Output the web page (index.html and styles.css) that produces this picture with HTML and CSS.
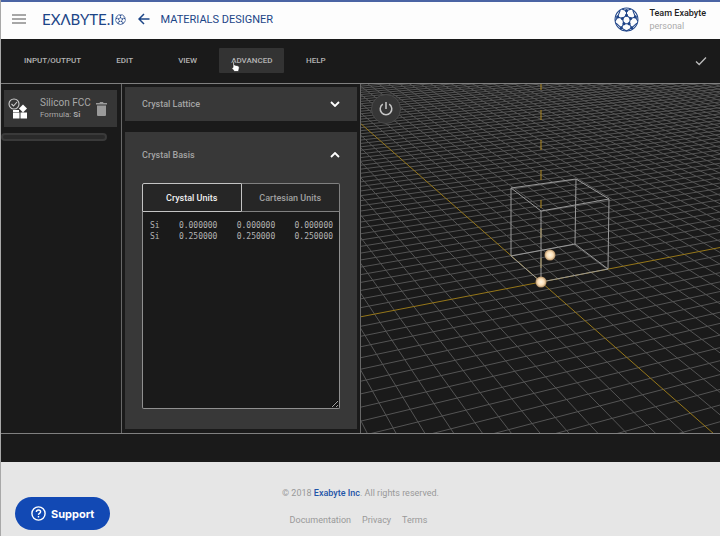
FILE: index.html
```
<!DOCTYPE html>
<html lang="en">
<head>
  <meta charset="utf-8">
  <title>Materials Designer</title>
  <link rel="stylesheet" href="styles.css">
</head>
<body>
  <header class="header">
    <button class="icon-button" type="button" aria-label="Menu">
      <svg width="14" height="10" viewBox="0 0 14 10"><path d="M0 1h14M0 5h14M0 9h14" stroke="#8a8a8a" stroke-width="1.6"/></svg>
    </button>
    <a class="logo" href="#">EXΛBYTE.I<svg width="11" height="11" viewBox="0 0 24 24"><use href="#ball"/></svg></a>
    <a class="back" href="#" aria-label="Back">
      <svg width="12" height="12" viewBox="0 0 12 12"><path d="M11.500 6H1M6 1L1 6l5 5" fill="none" stroke="#1c4587" stroke-width="1.5"/></svg>
    </a>
    <h1 class="title">MATERIALS DESIGNER</h1>
    <div class="account">
      <svg width="25" height="25" viewBox="0 0 24 24">
        <g id="ball" fill="none" stroke="#1f4488" stroke-width="1">
          <circle cx="12" cy="12" r="11"/>
          <path d="M12 8l4 3-1.500 5h-5L8 11zM12 8V3.500M16 11l4.500-1.500M14.500 16l2.500 4M9.500 16L7 20M8 11L3.500 9.500M12 3.500L7.500 1.900M12 3.500l4.500-1.600M20.500 9.500L18 3.100M20.500 9.500l2.300 4M17 20l5-4.500M17 20l-5 3M7 20l5 3M7 20l-5-4.500M3.500 9.500l-2.300 4M3.500 9.500L6 3.100"/>
          <path class="ball-dots" d="M12 8h0M16 11h0M14.500 16h0M9.500 16h0M8 11h0M12 3.500h0M20.500 9.500h0M17 20h0M7 20h0M3.500 9.500h0"/>
        </g>
      </svg>
      <div>
        <div class="account-name">Team Exabyte</div>
        <div class="account-type">personal</div>
      </div>
    </div>
  </header>

  <nav class="toolbar">
    <button class="menu" type="button">INPUT/OUTPUT</button>
    <button class="menu" type="button">EDIT</button>
    <button class="menu" type="button">VIEW</button>
    <button class="menu active" type="button">ADVANCED
      <svg class="pointer" width="9" height="11" viewBox="0 0 9 11"><path d="M2 1q1-1 1.500.3V4l3.500.8q1.500.4 1.300 2L7.500 10.500h-4L1 7.500Q0 6 2 6.500z" fill="#fff" stroke="#222" stroke-width=".7"/></svg>
    </button>
    <button class="menu" type="button">HELP</button>
    <svg class="saved" width="12" height="10" viewBox="0 0 12 10"><path d="M1 5.500L4.200 8.500L11 1.500" fill="none" stroke="#bbb" stroke-width="1.300"/></svg>
  </nav>

  <main class="designer">
    <section class="materials">
      <div class="material">
        <svg width="20" height="22" viewBox="0 0 20 22">
          <path d="M5 12h6v2H5zM5 14.500h6.500v6H5zM12.500 14.500h6.500v6h-6.500zM15 6.500l4 4-4 4-4-4z" fill="#fff"/>
          <circle cx="6" cy="6" r="5" fill="#363636" stroke="#ccc" stroke-width="1.100"/>
          <path d="M3.500 6l2 2 3.500-4" fill="none" stroke="#ccc" stroke-width="1.100"/>
        </svg>
        <div class="material-text">
          <div class="material-name">Silicon FCC</div>
          <div class="material-formula">Formula: <b>Si</b></div>
        </div>
        <button class="icon-button" type="button" aria-label="Delete">
          <svg width="11" height="14" viewBox="0 0 11 14"><path d="M0 1h3.500l.5-1h3l.5 1H11v1.500H0zM1 3.500h9V13q0 1-1 1H2q-1 0-1-1z" fill="#9a9a9a"/></svg>
        </button>
      </div>
      <div class="scroll-thumb"></div>
    </section>

    <section class="source">
      <div class="panel">
        <button class="panel-head" type="button">Crystal Lattice
          <svg width="10" height="6" viewBox="0 0 10 6"><path d="M1 1l4 4 4-4" fill="none" stroke="#fff" stroke-width="1.800"/></svg>
        </button>
      </div>
      <div class="panel open">
        <button class="panel-head" type="button">Crystal Basis
          <svg width="10" height="6" viewBox="0 0 10 6"><path d="M1 5l4-4 4 4" fill="none" stroke="#fff" stroke-width="1.800"/></svg>
        </button>
        <div class="units">
          <button class="unit selected" type="button">Crystal Units</button>
          <button class="unit" type="button">Cartesian Units</button>
        </div>
        <textarea class="basis" aria-label="Crystal Basis" spellcheck="false">Si    0.000000    0.000000    0.000000
Si    0.250000    0.250000    0.250000</textarea>
      </div>
    </section>

    <section class="viewer">
      <svg class="scene" viewBox="0 0 359 349" preserveAspectRatio="xMidYMid slice">
        <defs>
          <radialGradient id="atom">
            <stop offset="0" stop-color="#fff6e4"/>
            <stop offset=".6" stop-color="#f8dcb4"/>
            <stop offset="1" stop-color="#b08c62"/>
          </radialGradient>
        </defs>
        <path id="grid" class="grid"/>
        <path id="axes" class="axis"/>
        <path class="axis-up" d="M180 6V-4M180 36V26M180 66V56M180 96V86M180 124V116M180 154V144M180 184V174"/>
        <path class="cell" d="M180 198L247 185L214 160L150 172ZM180 127L248 115L215 95L150 104ZM180 198V127M247 185L248 115M214 160L215 95M150 172V104"/>
        <circle cx="189" cy="171" r="5.500" fill="url(#atom)"/>
        <circle cx="180" cy="198" r="5.500" fill="url(#atom)"/>
      </svg>
      <button class="power" type="button" aria-label="Toggle interaction">
        <svg width="14" height="14" viewBox="0 0 14 14"><path d="M7 0v7M3.800 2.200a5.800 5.800 0 1 0 6.400 0" fill="none" stroke="#c8c8c8" stroke-width="1.500"/></svg>
      </button>
    </section>
  </main>
  <div class="status"></div>

  <footer class="footer">
    <p class="copyright">© 2018 <a class="company" href="#">Exabyte Inc</a>. All rights reserved.</p>
    <div class="links">
      <a href="#">Documentation</a>
      <a href="#">Privacy</a>
      <a href="#">Terms</a>
    </div>
  </footer>

  <button class="support" type="button">
    <svg width="15" height="15" viewBox="0 0 15 15" fill="none" stroke="#fff" stroke-width="1.400"><circle cx="7.500" cy="7.500" r="6.600"/><path d="M5.400 6q0-2 2.100-2t2.100 1.800q0 1-1.100 1.600t-1 1.500M7.500 10v1.400"/></svg>
    Support
  </button>
  <script src="scene.js"></script>
</body>
</html>
```
FILE: styles.css
```
* {
  box-sizing: border-box;
}
body {
  margin: 0;
  min-height: 100vh;
  display: flex;
  flex-direction: column;
  background-color: #e6e6e6;
  border-left: 1px solid #a8a8a8;
  font-family: Roboto, sans-serif;
  font-size: 9px;
}
button {
  font-family: inherit;
  border: none;
  background: none;
  padding: 0;
}
a {
  color: inherit;
  text-decoration: none;
}
svg {
  display: block;
  flex: none;
}

/* top bar */
.header {
  display: flex;
  align-items: center;
  height: 39px;
  padding: 0 14px 3px 11px;
  border-top: 2px solid #4a64a4;
  background-color: #fdfdfd;
}
.icon-button {
  flex: none;
}
.logo {
  display: flex;
  align-items: center;
  margin-left: 16px;
  color: #1c4587;
  font-family: Lato, sans-serif;
  font-size: 15px;
}
.back {
  margin: 0 11px 0 12px;
}
.title {
  margin: 0;
  color: #1c4587;
  font-size: 11px;
  font-weight: 400;
}
.account {
  display: flex;
  align-items: center;
  gap: 10px;
  margin-left: auto;
}
.account-name {
  color: #222;
  font-size: 9px;
  font-weight: 500;
  line-height: 13px;
}
.account-type {
  color: #aaa;
  font-size: 9px;
  line-height: 12px;
}
.ball-dots {
  stroke-width: 3;
  stroke-linecap: round;
}

/* menus */
.toolbar {
  display: flex;
  align-items: center;
  height: 44px;
  padding: 0 13px 1px 11px;
  background-color: #1a1a1a;
}
.menu {
  position: relative;
  min-width: 63px;
  height: 25px;
  padding: 0 12px;
  border-radius: 1px;
  color: #b4b4b4;
  font-size: 8px;
  font-weight: 500;
}
.menu.active {
  background-color: #333;
}
.pointer {
  position: absolute;
  left: 12px;
  top: 13px;
}
.saved {
  margin-left: auto;
}

/* three columns */
.designer {
  display: grid;
  grid-template-columns: 121px 239px 1fr;
  border-top: 1px solid #808080;
  border-bottom: 1px solid #808080;
  background-color: #1a1a1a;
}
.materials {
  padding: 6px 4px 6px 3px;
  border-right: 1px solid #686868;
}
.material {
  display: flex;
  align-items: center;
  height: 37px;
  padding: 0 10px 0 4px;
  background-color: #363636;
}
.material-text {
  flex: 1;
  margin-left: 12px;
  color: #a8a8a8;
  white-space: nowrap;
}
.material-name {
  font-size: 10px;
  line-height: 12px;
}
.material-formula {
  font-size: 8px;
  line-height: 11px;
}
.scroll-thumb {
  width: 106px;
  height: 8px;
  margin: 6px 0 0 -3px;
  border: 2px solid #3a3a3a;
  border-radius: 4px;
  background-color: #2a2a2a;
}
.source {
  display: flex;
  flex-direction: column;
  gap: 11px;
  padding: 3px;
  border-right: 1px solid #686868;
}
.panel {
  padding: 0 17px;
  background-color: #383838;
}
.panel.open {
  padding-bottom: 20px;
}
.panel-head {
  display: flex;
  align-items: center;
  justify-content: space-between;
  width: 100%;
  height: 34px;
  color: #a4a4a4;
  font-size: 9px;
  font-weight: 500;
}
.open .panel-head {
  height: 46px;
}
.units {
  display: flex;
  margin-top: 5px;
}
.unit {
  flex: 1;
  height: 29px;
  border: 1px solid #808080;
  border-left: none;
  border-radius: 0 2px 0 0;
  background-color: #262626;
  color: #a0a0a0;
  font-size: 9px;
  font-weight: 500;
}
.unit.selected {
  border: 1px solid #c4c4c4;
  border-radius: 2px 0 0 0;
  color: #f0f0f0;
}
.basis {
  display: block;
  width: 100%;
  height: 197px;
  padding: 8px 7px;
  border: 1px solid #909090;
  border-top: none;
  border-radius: 0 0 2px 2px;
  background-color: #1a1a1a;
  color: #b4b4b4;
  font-family: "DejaVu Sans Mono", monospace;
  font-size: 8px;
  line-height: 11px;
  white-space: pre;
  overflow: hidden;
}

/* 3D view */
.viewer {
  position: relative;
  min-height: 349px;
}
.scene {
  position: absolute;
  width: 100%;
  height: 100%;
}
.grid {
  fill: none;
  stroke: #545454;
}
.axis,
.axis-up {
  fill: none;
  stroke: #96771a;
}
.axis-up {
  stroke: #b08a20;
}
.cell {
  fill: none;
  stroke: #9a9a9a;
}
.power {
  position: absolute;
  left: 10px;
  top: 10px;
  display: flex;
  align-items: center;
  justify-content: center;
  width: 30px;
  height: 30px;
  border: 1px solid #4a4a4a;
  border-radius: 50%;
  background-color: #363636;
}
.status {
  height: 28px;
  background-color: #1a1a1a;
}

/* footer */
.footer {
  padding: 24px 0 8px;
  color: #999;
  font-size: 9px;
  line-height: 15px;
  text-align: center;
}
.copyright {
  margin: 0 0 12px;
}
.company {
  color: #1f55a8;
  font-weight: 500;
}
.links {
  display: flex;
  justify-content: center;
  gap: 11px;
  padding-right: 4px;
}
.support {
  position: fixed;
  left: 15px;
  bottom: 6px;
  display: flex;
  align-items: center;
  gap: 5px;
  height: 33px;
  padding: 0 16px;
  border-radius: 17px;
  background-color: #1249b4;
  color: #fff;
  font-family: Inter, sans-serif;
  font-size: 11px;
  font-weight: 700;
}
```
FILE: scene.js
```
// ground plane seen in perspective, origin of the cell at 180,198
var ANGLE = 25.1 * Math.PI / 180;
var STEP_X = 18.9;
var STEP_Y = 7.78;
var HORIZON = 397;
var N = 110;

function depth(a, b) {
  return 1 + (a * Math.sin(ANGLE) + b * Math.cos(ANGLE)) * STEP_Y / HORIZON;
}

function project(a, b) {
  var u = a * Math.cos(ANGLE) - b * Math.sin(ANGLE);
  var v = a * Math.sin(ANGLE) + b * Math.cos(ANGLE);
  var w = depth(a, b);
  return (180 + STEP_X * u / w).toFixed(1) + " " + (198 - STEP_Y * v / w).toFixed(1);
}

function line(a1, b1, a2, b2) {
  // keep the near end in front of the camera
  var w1 = depth(a1, b1);
  var w2 = depth(a2, b2);
  if (w2 < 0.2) return "";
  if (w1 < 0.2) {
    var t = (0.2 - w1) / (w2 - w1);
    a1 += (a2 - a1) * t;
    b1 += (b2 - b1) * t;
  }
  return "M" + project(a1, b1) + "L" + project(a2, b2);
}

var d = "";
for (var i = -N; i <= N; i++) {
  if (i == 0) continue;
  d += line(-N, i, N, i);
  d += line(i, -N, i, N);
}
document.getElementById("grid").setAttribute("d", d);
document.getElementById("axes").setAttribute("d", line(-N, 0, N, 0) + line(0, -N, 0, N));
```
